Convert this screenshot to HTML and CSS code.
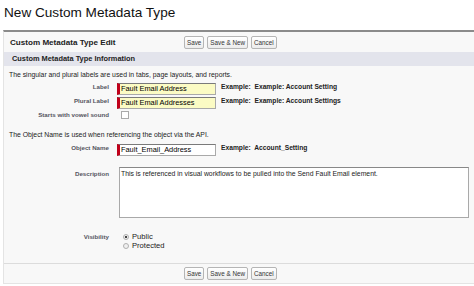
FILE: index.html
```html
<!DOCTYPE html>
<html lang="en">
<head>
    <meta charset="UTF-8">
    <title>New Custom Metadata Type</title>
    <link rel="stylesheet" href="styles.css">
</head>
<body>

    <h1 class="page-title">New Custom Metadata Type</h1>

    <div class="panel">
        <div class="panel-head">
            <h2>Custom Metadata Type Edit</h2>
            <div class="buttons">
                <button>Save</button>
                <button>Save &amp; New</button>
                <button>Cancel</button>
            </div>
        </div>

        <h3 class="section-head">Custom Metadata Type Information</h3>

        <p class="note">The singular and plural labels are used in tabs, page layouts, and reports.</p>

        <div class="row">
            <label>Label</label>
            <div class="field"><input class="req hl" type="text" value="Fault Email Address"></div>
            <span class="example">Example:&nbsp; Example: Account Setting</span>
        </div>
        <div class="row">
            <label>Plural Label</label>
            <div class="field"><input class="req hl" type="text" value="Fault Email Addresses"></div>
            <span class="example">Example:&nbsp; Example: Account Settings</span>
        </div>
        <div class="row">
            <label>Starts with vowel sound</label>
            <div class="field"><input class="check" type="checkbox"></div>
        </div>

        <p class="note note-api">The Object Name is used when referencing the object via the API.</p>

        <div class="row">
            <label>Object Name</label>
            <div class="field"><input class="req" type="text" value="Fault_Email_Address"></div>
            <span class="example">Example:&nbsp; Account_Setting</span>
        </div>

        <div class="row row-desc">
            <label>Description</label>
            <textarea>This is referenced in visual workflows to be pulled into the Send Fault Email element.</textarea>
        </div>

        <div class="row row-vis">
            <label>Visibility</label>
            <div class="radios">
                <div class="radio"><span class="dot on"></span>Public</div>
                <div class="radio"><span class="dot"></span>Protected</div>
            </div>
        </div>

        <div class="panel-foot">
            <div class="buttons">
                <button>Save</button>
                <button>Save &amp; New</button>
                <button>Cancel</button>
            </div>
        </div>
    </div>

</body>
</html>
```

FILE: styles.css
```css
body {
    margin: 0;
    font-family: "Liberation Sans", Arial, sans-serif;
    color: #222;
    background: #fff;
}

.page-title {
    margin: 0;
    padding: 5px 0 0 4px;
    height: 30px;
    box-sizing: border-box;
    font-size: 13.6px;
    font-weight: normal;
    color: #111;
}

.panel {
    margin-left: 3px;
    background: #f8f8f8;
    border-top: 2px solid #8b8b8b;
    border-left: 1px solid #e4e4e4;
    border-bottom: 1px solid #e4e4e4;
}

.panel-head {
    display: flex;
    align-items: center;
    height: 20px;
}

.panel-head h2 {
    margin: 0;
    width: 180px;
    padding-left: 6px;
    box-sizing: border-box;
    font-size: 8.1px;
    color: #222;
}

.buttons {
    display: flex;
    gap: 3px;
}

.buttons button {
    height: 13px;
    padding: 0 2px;
    font-family: inherit;
    font-size: 6.3px;
    color: #333;
    background: linear-gradient(#fff, #ececec);
    border: 1px solid #b5b5b5;
    border-radius: 2px;
}

.section-head {
    margin: 0;
    height: 14px;
    line-height: 14px;
    padding-left: 8px;
    font-size: 7.4px;
    color: #222;
    background: #e3e4ec;
}

.note {
    margin: 0;
    padding: 4px 0 0 5px;
    line-height: 9px;
    font-size: 6.85px;
    color: #222;
}

.note-api {
    padding-top: 9px;
    line-height: 10px;
}

.row {
    display: flex;
    align-items: center;
    height: 14px;
}

.row label {
    width: 105px;
    text-align: right;
    font-size: 6.2px;
    font-weight: bold;
    color: #55555f;
}

.field {
    width: 110px;
    padding-left: 8px;
    box-sizing: border-box;
}

.field input {
    width: 99px;
    height: 12px;
    box-sizing: border-box;
    padding: 0 1px;
    font-family: inherit;
    font-size: 7.4px;
    color: #000;
    background: #fff;
    border: 1px solid #a9a9a9;
    border-top-color: #7a7a7a;
}

.field input.req {
    border-left: 3px solid #c0001a;
}

.field input.hl {
    background: #fbfbc4;
}

.field input.check {
    width: 8px;
    height: 8px;
    margin: 0 0 0 4px;
    border: 1px solid #aaa;
    background: #fff;
    appearance: none;
}

.example {
    padding-left: 2px;
    font-size: 6.7px;
    font-weight: bold;
    color: #222;
}

.row-desc {
    align-items: flex-start;
    height: 64px;
    box-sizing: border-box;
    padding-top: 13px;
}

.row-desc label {
    padding-top: 3px;
}

.row-desc textarea {
    margin-left: 10px;
    width: 350px;
    height: 51px;
    box-sizing: border-box;
    padding: 2px 1px;
    resize: none;
    font-family: inherit;
    font-size: 6.85px;
    color: #222;
    border: 1px solid #a9a9a9;
    border-top-color: #888;
}

.row-vis {
    align-items: flex-start;
    height: 45px;
    box-sizing: border-box;
    padding-top: 14px;
}

.row-vis label {
    padding-top: 1px;
}

.radios {
    padding-left: 14px;
}

.radio {
    display: flex;
    align-items: center;
    gap: 3px;
    height: 9px;
    font-size: 7.6px;
    color: #222;
}

.dot {
    width: 6px;
    height: 6px;
    box-sizing: border-box;
    border: 1px solid #b0b0b0;
    border-radius: 50%;
    background: #f0f0f0;
}

.dot.on {
    background: radial-gradient(#444 35%, #eee 45%);
}

.panel-foot {
    display: flex;
    align-items: center;
    height: 19px;
    padding-left: 180px;
    border-top: 1px solid #dcdcdc;
}
```
